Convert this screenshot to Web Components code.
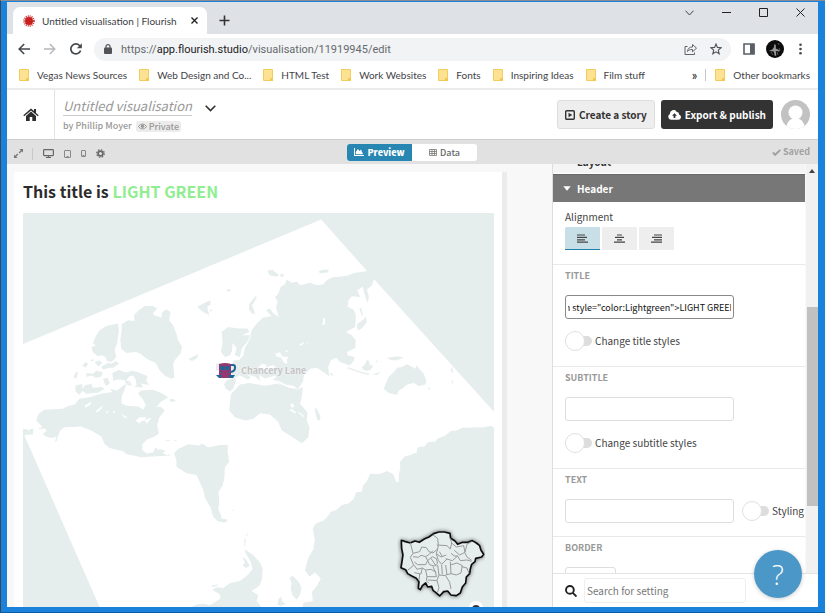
<!DOCTYPE html>
<html lang="en">
<head>
<meta charset="utf-8">
<title>Untitled visualisation | Flourish</title>
<style>
html, body { margin: 0; height: 100%; }
body { overflow: hidden; }
</style>
</head>
<body>
<browser-window></browser-window>
<script>
const BASE = `
:host, *, *::before, *::after { box-sizing: border-box; }
button { font: inherit; color: inherit; border: 0; background: none; padding: 0; margin: 0; display: flex; align-items: center; justify-content: center; }
a { color: inherit; text-decoration: none; }
svg { display: block; flex: none; }
`;
function element(name, css, html, setup) {
  const template = document.createElement('template');
  template.innerHTML = `<style>${BASE}${css}</style>${html}`;
  customElements.define(name, class extends HTMLElement {
    connectedCallback() {
      if (this.shadowRoot) return;
      this.attachShadow({ mode: 'open' }).append(template.content.cloneNode(true));
      if (setup) setup(this, this.shadowRoot);
    }
  });
}

element('browser-window', `
:host { display: flex; flex-direction: column; height: 100vh; padding: 1px 7px 5px 6px; background: #1a82da; border-left: 1px solid #3a4656; border-top: 1px solid #8b8b92; border-bottom: 1px solid #0a5ba8;
  font-family: Roboto, "Open Sans", sans-serif; color: #3c4043; --app: "Noto Sans CJK SC", "Open Sans", sans-serif; --chrome: Lato, Roboto, sans-serif; }
browser-tabs, browser-address, bookmark-bar, app-header, view-bar { flex: none; }
app-workspace { flex: 1; min-height: 0; }
`, `
<browser-tabs></browser-tabs>
<browser-address></browser-address>
<bookmark-bar></bookmark-bar>
<app-header></app-header>
<view-bar></view-bar>
<app-workspace></app-workspace>
`);

element('browser-tabs', `
:host { display: flex; height: 32px; background: #dee1e6; align-items: stretch; padding: 5px 6px 0 6px; }
.tab { width: 194px; background: #fff; border-radius: 7px 7px 0 0; display: flex; align-items: center; padding: 0 8px 0 10px; font-family: var(--chrome); font-size: 10px; gap: 7px; }
.tab span { flex: 1; white-space: nowrap; }
.new { width: 35px; color: #333; }
.win { margin-left: auto; display: flex; gap: 13px; padding-bottom: 16px; color: #222; }
.win button { width: 24px; }
`, `
<div class="tab">
<svg width="12" height="12" viewBox="0 0 12 12"><circle cx="6" cy="6" r="4" fill="#c8201f"/><circle cx="6" cy="6" r="4.7" fill="none" stroke="#d0393a" stroke-width="2.2" stroke-dasharray="1 .85"/></svg>
<span>Untitled visualisation | Flourish</span>
<button aria-label="Close tab"><svg width="9" height="9" viewBox="0 0 9 9" stroke="#222" stroke-width="1.4"><path d="M1.5 1.5l6 6M7.5 1.5l-6 6"/></svg></button>
</div>
<button class="new" aria-label="New tab"><svg width="11" height="11" viewBox="0 0 11 11" stroke="currentColor" stroke-width="1.6"><path d="M5.500.5v10M.5 5.500h10"/></svg></button>
<div class="win">
<button aria-label="Search tabs"><svg width="9" height="6" viewBox="0 0 9 6" fill="none" stroke="#444"><path d="M.5.7l4 4.300 4-4.300"/></svg></button>
<button aria-label="Minimise"><svg width="9" height="9" viewBox="0 0 9 9"><path d="M0 4.500h9" stroke="currentColor"/></svg></button>
<button aria-label="Maximise"><svg width="9" height="9" viewBox="0 0 9 9"><path d="M.5.5h8v8h-8z" fill="none" stroke="currentColor"/></svg></button>
<button aria-label="Close"><svg width="9" height="9" viewBox="0 0 9 9"><path d="M.5.5l8 8M8.500.5l-8 8" stroke="currentColor"/></svg></button>
</div>
`);

element('browser-address', `
:host { display: flex; height: 30px; background: #fff; align-items: center; padding: 0 13px 0 11px; }
nav { display: flex; gap: 14px; margin-right: 12px; }
nav button { width: 12px; height: 22px; }
.url { flex: 1; display: flex; align-items: center; height: 23px; border-radius: 12px; background: #f1f3f4; padding: 0 9px 0 10px; font-size: 11px; color: #666a6e; }
.url svg { margin-right: 9px; }
.url p { margin: 0; flex: 1; }
.url b { font-weight: 400; color: #202124; }
.url button svg { margin: 0; }
.url button + button { margin-left: 13px; }
.tools { display: flex; align-items: center; gap: 11px; margin-left: 12px; }
`, `
<nav>
<button aria-label="Back"><svg width="12" height="12" viewBox="0 0 12 12" fill="none" stroke="#45484c" stroke-width="1.600"><path d="M12 6H1.500M6.200 1L1.200 6l5 5"/></svg></button>
<button aria-label="Forward"><svg width="12" height="12" viewBox="0 0 12 12" fill="none" stroke="#b5b7ba" stroke-width="1.400"><path d="M0 6h10.500M5.800 1l5 5-5 5"/></svg></button>
<button aria-label="Reload"><svg width="12" height="12" viewBox="0 0 12 12" fill="none" stroke="#45484c" stroke-width="1.700"><path d="M10.600 7.500A5 5 0 1 1 9.500 2.500L11 4"/><path d="M11.800.2v5H6.800z" fill="#45484c" stroke="none"/></svg></button>
</nav>
<div class="url">
<svg width="8" height="10" viewBox="0 0 8 10"><rect y="3.600" width="8" height="6.400" rx="1" fill="#505358"/><path d="M2 4V2.600a2 2 0 0 1 4 0V4" fill="none" stroke="#505358" stroke-width="1.200"/></svg>
<p>https://<b>app.flourish.studio</b>/visualisation/11919945/edit</p>
<button aria-label="Share"><svg width="13" height="12" viewBox="0 0 13 12" fill="none" stroke="#5f6368"><path d="M3.500 3.500H1v8h9.500V9.500M3.500 8.500c.3-3 2-4.500 5-4.500V1.500l4 3.700-4 3.600V6.500c-2.500 0-4 .6-5 2z"/></svg></button>
<button aria-label="Bookmark"><svg width="12" height="12" viewBox="0 0 12 12" fill="none" stroke="#505358" stroke-width="1.100"><path d="M6 1l1.400 3.400 3.700.3-2.800 2.400.9 3.700L6 8.800l-3.200 2 .9-3.700L.9 4.700l3.700-.3z"/></svg></button>
</div>
<div class="tools">
<button aria-label="Side panel"><svg width="12" height="12" viewBox="0 0 12 12"><path d="M1 1h10v10H1z" fill="none" stroke="#5b5f66" stroke-width="1.600"/><path d="M7 1h4.500v10H7z" fill="#5b6068"/></svg></button>
<button aria-label="Profile"><svg width="18" height="18" viewBox="0 0 18 18"><circle cx="9" cy="9" r="9" fill="#0c0c0c"/><path d="M8.500 4l1.300 1v3.500l4 2-.5 1-3.500-.5.500 4.500-1.500.5-1-4.500-5-.5 3.500-1.500 1.500-2z" fill="#9a9a9a"/><path d="M12 3l1 2M13 8l1 3M5 12l2 3M11 12l1 3" stroke="#555"/></svg></button>
<button aria-label="Menu" style="width:10px"><svg width="3" height="12" viewBox="0 0 3 12" fill="#45484c"><circle cx="1.500" cy="1.700" r="1.300"/><circle cx="1.500" cy="6" r="1.300"/><circle cx="1.500" cy="10.300" r="1.300"/></svg></button>
</div>
`);

element('bookmark-item', `
:host { display: block; }
a { display: flex; align-items: center; gap: 8px; white-space: nowrap; }
`, `<a href="#"><svg width="10" height="12" viewBox="0 0 10 12"><path d="M.5.5h9v11h-9z" fill="#fde293" stroke="#f0cd5d"/><path d="M7 9h3v3H7z" fill="#f2c94f"/></svg><slot></slot></a>`);

element('bookmark-bar', `
:host { display: flex; align-items: center; height: 26px; padding: 0 8px 2px 12px; background: #fff; border-bottom: 2px solid #eaebec; font-family: var(--chrome); font-size: 10px; color: #3f4347; }
.list { flex: 1; display: flex; gap: 12px; }
.more { color: #222; padding-right: 8px; font-size: 13px; }
.other { border-left: 1px solid #c4c6c9; padding-left: 9px; }
`, `
<div class="list">
<bookmark-item>Vegas News Sources</bookmark-item><bookmark-item>Web Design and Co...</bookmark-item><bookmark-item>HTML Test</bookmark-item><bookmark-item>Work Websites</bookmark-item><bookmark-item>Fonts</bookmark-item><bookmark-item>Inspiring Ideas</bookmark-item><bookmark-item>Film stuff</bookmark-item>
</div>
<button class="more" aria-label="More bookmarks">»</button>
<div class="other"><bookmark-item>Other bookmarks</bookmark-item></div>
`);

element('app-header', `
:host { display: flex; align-items: center; height: 50px; background: #fff; border-bottom: 1px solid #cdcdcd; font-family: var(--app); padding-right: 8px; }
.home { width: 48px; align-self: stretch; display: flex; align-items: center; justify-content: center; border-right: 1px solid #e3e3e3; }
.name { margin-left: 8px; }
h1 { margin: 0 0 4px; font-size: 13px; line-height: 18px; font-weight: 400; font-style: italic; color: #999; border-bottom: 1px solid #ccc; }
.by { display: flex; align-items: center; gap: 4px; font-size: 9px; line-height: 12px; color: #999; font-weight: 500; }
.tag { display: flex; align-items: center; gap: 2px; background: #ececec; border-radius: 3px; padding: 0 2px; line-height: 11px; }
.menu { margin: 0 auto 12px 13px; }
.btn { height: 29px; border-radius: 3px; font-size: 10px; font-weight: 700; white-space: nowrap; gap: 4px; padding: 0 7px; }
.story { background: #eee; border: 1px solid #ddd; color: #333; }
.export { background: #333; color: #fff; margin: 0 8px 0 6px; }
`, `
<a class="home" href="#" aria-label="Home"><svg width="16" height="13" viewBox="0 0 16 13" fill="#2e2e2e"><path d="M8 .5l3 2.600V1h2v3.900l2.700 2.400-.9 1L8 2.400 1.200 8.300l-.9-1z"/><path d="M8 3.600l5 4.300V13H9.300V9H6.700v4H3V7.900z"/></svg></a>
<div class="name">
<h1>Untitled visualisation</h1>
<div class="by"><span>by Phillip Moyer</span><span class="tag"><svg width="9" height="7" viewBox="0 0 9 7"><path d="M.3 3.500Q4.500-1.500 8.700 3.500 4.500 8.500.3 3.500z" fill="none" stroke="#999"/><circle cx="4.500" cy="3.200" r="1.700" fill="#999"/></svg>Private</span></div>
</div>
<button class="menu" aria-label="Menu"><svg width="11" height="7" viewBox="0 0 11 7" fill="none" stroke="#333" stroke-width="1.600"><path d="M.7.8l4.800 4.800L10.300.8"/></svg></button>
<button class="btn story"><svg width="10" height="10" viewBox="0 0 10 10"><rect x=".7" y=".7" width="8.600" height="8.600" rx="1" fill="none" stroke="#333" stroke-width="1.400"/><path d="M3.500 2.700v4.600L7.300 5z" fill="#333"/></svg>Create a story</button>
<button class="btn export"><svg width="13" height="10" viewBox="0 0 13 10"><path d="M3 9.800a3 3 0 0 1-1-5.700A3.600 3.600 0 0 1 8.800 2a2.200 2.200 0 0 1 2.200 2.500 2.700 2.700 0 0 1-.8 5.300z" fill="#fff"/><path d="M6.500 3.200L4 5.800h1.600V8h1.800V5.800H9z" fill="#333"/></svg>Export &amp; publish</button>
<svg width="29" height="29" viewBox="0 0 29 29" role="img" aria-label="Account"><defs><clipPath id="c"><circle cx="14.500" cy="14.500" r="14.500"/></clipPath></defs><g clip-path="url(#c)"><path d="M0 0h29v29H0z" fill="#c2c2c2"/><circle cx="14.500" cy="12.500" r="7" fill="#fff"/><path d="M5 29c1-8 4-10.500 9.500-10.500S23 21 24 29z" fill="#fff"/></g></svg>
`);

element('view-bar', `
:host { display: grid; grid-template-columns: 1fr auto 1fr; align-items: center; height: 24px; background: #e1e1e1; font-family: var(--app); padding: 0 8px 0 7px; }
.left { display: flex; align-items: center; padding-top: 3px; }
.sep { width: 1px; height: 12px; background: #c8c8c8; margin: 0 10px 0 9px; }
.left button + button { margin-left: 10px; }
.tabs { display: flex; font-size: 9px; font-weight: 500; color: #666; height: 17px; border-radius: 3px; overflow: hidden; background: #fff; }
.tabs button { width: 65px; gap: 3px; }
.tabs .on { background: #2886b2; color: #fff; font-weight: 900; }
.saved { justify-self: end; display: flex; align-items: center; gap: 2px; font-size: 9px; line-height: 14px; font-weight: 700; color: #a2a2a2; }
`, `
<div class="left">
<button aria-label="Full screen"><svg width="9" height="9" viewBox="0 0 9 9" fill="#777"><path d="M5.500 0H9v3.500L7.800 2.300 5.700 4.400l-1-1 2.100-2.200zM3.500 9H0V5.500l1.200 1.200 2.100-2.100 1 1-2.100 2.200z"/></svg></button>
<span class="sep"></span>
<button aria-label="Desktop"><svg width="11" height="9" viewBox="0 0 11 9"><rect x=".6" y=".6" width="9.800" height="6" rx=".8" fill="none" stroke="#666" stroke-width="1.200"/><path d="M3 8.500h5M5.500 6.500V8.500" stroke="#666" stroke-width="1.200"/></svg></button>
<button aria-label="Tablet"><svg width="7" height="8" viewBox="0 0 7 8"><rect x=".5" y=".5" width="6" height="7" rx=".5" fill="none" stroke="#888"/><path d="M2.500 6.500h2" stroke="#888"/></svg></button>
<button aria-label="Mobile"><svg width="5" height="7" viewBox="0 0 5 7"><rect x=".5" y=".5" width="4" height="6" rx=".5" fill="none" stroke="#888"/><path d="M1.500 5.500h2" stroke="#888"/></svg></button>
<button aria-label="Settings"><svg width="9" height="9" viewBox="0 0 9 9"><circle cx="4.500" cy="4.500" r="2.400" fill="none" stroke="#6a6a6a" stroke-width="1.800"/><circle cx="4.500" cy="4.500" r="3.800" fill="none" stroke="#6a6a6a" stroke-width="1.200" stroke-dasharray="1.500 1.480"/></svg></button>
</div>
<div class="tabs">
<button class="on"><svg width="10" height="8" viewBox="0 0 10 8" fill="#fff"><path d="M0 0h1v7h9v1H0zM1.800 6.200V4l2-3 1.700 2 1.500-1.500 2 4.700z"/></svg>Preview</button>
<button><svg width="8" height="7" viewBox="0 0 8 7" fill="none" stroke="#777"><path d="M.5.5h7v6h-7zM.5 2.500h7M.5 4.500h7M3 .5v6M5.500.5v6" stroke-width=".8"/></svg>Data</button>
</div>
<div class="saved"><svg width="9" height="7" viewBox="0 0 9 7" fill="none" stroke="#a2a2a2" stroke-width="2"><path d="M.8 3.500l2.400 2.300L8.300.9"/></svg>Saved</div>
`);

element('app-workspace', `
:host { display: flex; background: #f8f8f8; font-family: var(--app); }
vis-preview { flex: 1; min-width: 0; margin: 8px 45px 0 7px; }
settings-panel { width: 266px; flex: none; }
`, `<vis-preview></vis-preview><settings-panel></settings-panel>`);

element('vis-preview', `
:host { display: flex; flex-direction: column; background: #fff; border-right: 5px solid #ebebeb; padding: 0 8px 0 9px; }
h2 { margin: 5px 0 8px; font-size: 16px; line-height: 28px; font-weight: 700; color: #2c2c2c; }
h2 span { color: #90ee90; }
world-map { flex: 1; min-height: 0; }
`, `<h2>This title is <span>LIGHT GREEN</span></h2><world-map></world-map>`);

element('map-controls', `
:host { display: flex; flex-direction: column; width: 26px; background: #fff; border: 1px solid #cdd3d3; border-radius: 4px; box-shadow: 0 0 0 1px #dbe1e1; }
button { height: 24px; }
button + button { height: 25px; border-top: 1px solid #ddd; }
`, `
<button aria-label="Zoom in"><svg width="10" height="10" viewBox="0 0 10 10" stroke="#222" stroke-width="2" stroke-linecap="round"><path d="M5 1v8M1 5h8"/></svg></button>
<button aria-label="Zoom out"><svg width="10" height="10" viewBox="0 0 10 10" stroke="#222" stroke-width="2" stroke-linecap="round"><path d="M1 5h8"/></svg></button>
<button aria-label="Reset bearing"><svg width="10" height="13" viewBox="0 0 10 13"><path d="M1 0v8l5.500-4z" fill="#222"/><path d="M9 13V5L3 8.800z" fill="#bbb"/></svg></button>
`);

element('world-map', `
:host { display: block; position: relative; overflow: hidden; background: #fff; }
.land { width: 100%; height: 100%; }
map-controls { position: absolute; top: 8px; right: 7px; }
.pin { position: absolute; left: 193px; top: 149px; display: flex; align-items: center; gap: 5px; font-size: 9px; line-height: 16px; font-weight: 700; color: #c4c4c4; white-space: nowrap; text-shadow: 0 0 2px #fff; }
.inset { position: absolute; right: 9px; bottom: 5px; }
.info { position: absolute; right: 11px; bottom: -11px; width: 14px; height: 17px; }
`, `
<svg class="land" viewBox="23 213 471 393" preserveAspectRatio="xMidYMin slice" fill="#e6eded">
<path d="M23 213H495V413L372 277 369 276 366 270 321 219.500 23 344z"/>
<path d="M23 428l5 1 2 2 4-1-1 3 1 1-6 0-3 1L100 606H23z"/>
<g transform="translate(30 330) scale(.3333)">
<path d="M200 15L210 0 230 -13 265 -20 268 0 262 40 255 60 260 80 245 95 232 92 228 80 215 75 205 78 190 66 186 50 200 45 190 40z"/>
<path d="M272 30L276 0 276 -18 295 -30 315 -28 313 -45 325 -58 345 -73 370 -73 383 -65 370 -52 372 -46 395 -38 398 -55 410 -63 422 -55 418 -30 430 -15 440 10 444 28 457 50 452 70 438 85 430 100 434 142 424 145 405 135 390 120 378 98 350 85 335 72 320 65 290 68 275 55z"/>
<path d="M215 108l20-10 10 2 15-8 8 8-18 12-10 0-20 5zM195 95l15-5 8 8-12 10zM158 105l10-10 8 5-8 12zM170 128l20 2 10-10 20 6-5 12-18 5-8-8-18 4zM132 145l5-18 8-3-3 18zM138 165l20-4 2 20-10 12-12-10zM165 165l20-5 5 12 25-2 10 5-20 12-35 3-12-10zM220 145l15-2 5 18-12 5zM180 90l12-3v6z"/>
<path d="M248 128l20-10 20 8 20-5 15 4 30 12-3 15 8 12-25-5 8 12-28-2-8-15-15 5-5-10-22-2-12 5z"/>
<path d="M20 270L28 250 45 238 100 235 112 228 135 222 150 205 180 200 215 190 248 185 242 175 262 180 278 168 290 160 284 180 277 195 275 218 290 226 325 228 342 237 348 222 338 205 325 190 333 180 370 178 395 188 415 200 392 215 380 230 392 228 405 240 388 262 382 285 388 308 375 318 352 327 338 340 338 358 350 369 370 366 378 350 388 362 410 373 420 371 422 375 380 377 335 380 290 370 280 362 240 352 225 340 215 318 185 300 155 288 105 290 92 300 85 318 68 322 55 320 40 312 52 300 38 288z"/>
<path d="M418 208l10-3 11 4-12 6zM475 85l12-4 18-10-3 12-15 9zM403 328l18 1-4 4zM428 330l12-3 0 4zM285 160l30-5-3 14z"/>
<path d="M0 296l12-1-3 15-9 2zM25 293l20-5-5 8zM75 335l10-25-2 20z"/>
<path d="M165 226l20-12-2 8-15 10zM198 242l22-18-4 10-14 12zM228 248l10-10-4 10zM250 240l8 5-5 3zM275 250l20 12-10 0zM318 270l12-10 20 0-4 8 20-6-16 18-4-10-12 2-4 8z" fill="#fff"/>
<path d="M290 150l8-12 12-3 8 12 3 18-14 6-4-18z" fill="#fff"/>
</g>
<g transform="translate(0 385) scale(.3333)">
<path d="M523 203L535 190 565 176 600 180 605 173 625 186 660 178 684 178 683 200 688 228 675 245 673 280 668 300 656 318 658 350 655 370 664 390 665 398 684 402 678 410 655 407 640 393 632 365 615 335 610 312 590 268 560 263 530 243 530 225z"/>
<path d="M694 376l8-3 0 3zM470 198l10-8 18 6-8 6zM738 450l6-10-2 10z"/>
<path d="M732 462L737 458 735 490 760 508 780 530 788 548 786 580 778 600 755 615 775 628 770 645 785 665H572L592 655 612 653 630 658 662 638 660 625 637 612 650 604 670 606 690 592 720 585 740 570 758 550 752 528 736 500z"/>
<path d="M726 512L738 520 749 540 738 546 728 538 735 530zM635 600l20-5-5 5-14 4z"/>
</g>
<g transform="translate(270 385) scale(.3333)">
<path d="M674 128L660 121 640 125 610 126 575 127 560 134 540 137 525 150 500 160 495 168 472 170 462 183 445 184 440 190 440 200 420 208 403 213 388 230 390 245 386 265 385 288 378 290 368 265 350 256 330 265 300 264 290 285 278 300 275 318 258 320 250 340 235 353 215 358 198 373 182 378 172 393 160 405 145 410 135 415 128 430 134 460 130 490 115 515 104 553 118 572 135 560 152 578 140 600 125 618 128 645 100 650 97 665H674z"/>
<path d="M58 575l10-5 18 18 8 18-4 20-10 15-12-12-6-20 2-18zM25 640l8-8 4 14 10 8-15 6-10-4z"/>
</g>
<g transform="translate(210 260) scale(.3333)">
<path d="M467 33L435 38 410 47 365 52 348 62 340 72 320 75 300 68 270 75 262 65 245 68 230 58 225 72 212 80 205 100 195 110 203 125 198 140 206 170 190 160 180 145 168 150 185 168 160 172 140 190 125 210 120 235 105 262 100 285 88 300 72 300 60 325 52 345 70 355 90 345 115 358 122 350 110 342 135 348 150 362 148 344 165 354 195 345 200 350 188 358 215 375 250 382 262 388 278 365 282 342 300 325 320 322 340 335 357 348 354 320 362 300 378 292 390 305 405 310 418 315 430 302 433 290 412 285 410 275 436 262 436 240 425 225 407 215 420 208 435 200 437 165 430 148 412 140 415 120 425 108 450 110 441 90 458 80 462 100 472 128 476 110 470 88 485 75 490 60 495 50 475 30z"/>
<path d="M35 215L55 200 85 205 112 205 118 215 95 225 120 225 115 240 95 265 90 290 75 285 80 262 68 248 66 272 60 285 45 290 33 275 38 250z"/>
<path d="M-38 140L-20 130 0 120 3 132-8 140-2 165-20 155zM118 130l20-23 2 6-14 22 10 28-12-5-7-12zM172 32l15-3 20 16-10 5-18-5zM210 42l10-1 1 10-9-2zM325 34l12-5 20 0-5 8-22 2zM50 90l8-5 4 6-8 4zM0 146l9 5-7 3zM18 312l10-6 4 20-14 6z"/>
<path d="M42 372l8-12 25-10 3 12-8 22-10 9-12-8z"/>
<path d="M64 400L90 372 120 368 165 376 200 370 232 378 262 388 278 380 275 410 270 430 292 455 290 480 298 500 295 530 275 548 240 525 215 510 205 485 180 462 150 458 130 475 105 480 75 470 58 450 60 425z"/>
<path d="M313 445l6-2 12 25-2 12-8-2zM455 320l10-8 4-12 6 0 4 14 10 2-8 12-12 4-10-4zM412 320l30 10-4 3-26-9zM438 330l40 10-3 4-35-9zM358 338l8 0 4 9-6-2zM530 292l35-4 15 4-20 8-18 0zM485 342l28-8-12 10zM440 192l22-16 4-8 4 18-18 20-10 4zM455 165l-8-20 6-2 6 22zM720 330l6-12 1 22zM724 355l5 15-5-3zM498 298l5 6-4 4zM652 383l8-2-4 8z"/>
<path d="M520 385L535 350 555 330 560 322 575 320 590 312 605 320 615 325 618 315 640 340 648 360 645 372 625 377 610 368 590 372 575 385 565 390 560 404 535 398z"/>
<g fill="#fff"><path d="M338 172l7 5 0 14-10 5 4-10zM268 252l15-7-6 8-8 4zM196 280l14-4 6 12 18 2-4 10 2 10-10-2-8-16-16-4zM145 320l12-10 14 4-4 8 20-8 12 6-14 6-36 2zM188 358l20 4 18 10 24 4 12 8-24-1-30-14zM240 432l8-4 6 10-8 4zM243 445l15 10-3 4-16-10zM265 453l18 14-4 2-14-12zM288 252l4-6 0 6zM225 274l6-6 2 8z"/></g>
</g>
</svg>
<div class="pin">
<svg width="20" height="17" viewBox="0 0 20 17"><path d="M15 3h2q2 0 2 2v1q0 3-4 4" fill="none" stroke="#1c6797" stroke-width="2"/><path d="M3 2Q9 0 15 2v11l-2 2H5l-2-2z" fill="#943873"/><path d="M0 13h5l2 2h4l2-2h6l-2 3H3z" fill="#1c6797"/><path d="M5 14l2-2h4l2 2v2H5z" fill="#943873"/><path d="M4.500 4h4v4h-4zM9.500 4h4v4h-4zM4.500 9.500h1.500V11H4.500zM12 9.500h1.500V11H12z" fill="#1c6797"/></svg>
<span>Chancery Lane</span></div>
<svg class="inset" width="88" height="75" viewBox="396 527 88 75" role="img" aria-label="London boroughs">
<defs><filter id="s" x="-20%" y="-20%" width="140%" height="140%"><feDropShadow dx="0" dy="0" stdDeviation="7" flood-color="#000" flood-opacity=".6"/></filter></defs>
<g transform="translate(270 385) scale(.3333)">
<path filter="url(#s)" d="M391 466L403 470 418 474 432 468 445 472 460 462 474 456 488 446 504 441 520 441 537 445 539 460 552 468 560 478 575 472 590 472 604 467 616 474 626 482 630 496 638 508 632 516 614 520 612 530 602 538 598 552 596 566 586 576 584 594 574 606 568 624 556 632 540 630 530 618 518 620 506 633 494 622 486 616 482 604 470 606 464 594 454 602 448 614 442 610 444 590 436 580 424 574 410 566 404 554 390 548 393 530 396 510 392 490z" fill="#e6eded" stroke="#111" stroke-width="5" stroke-linejoin="round"/>
<g fill="none" stroke="#999" stroke-width="3"><path d="M418 473L426 505 418 517 428 541 410 556M426 505l20-5 6-14 14 2 8 12 12 4 14-12 2-12-2-20-14-10M426 515l16 2 8-6 14 4 6 12-6 12-24 0-10-8M464 515l12-8 10-10M498 480l30 2 10 10 4-18-4-14M500 492l-4 14 14 10 16-6M542 474l14 12 22-4 4 20-16 8-16-14M582 502l6-24 14-8M582 504l6 12 14 10M540 505l10 8 10 0 8 14 20-2 14 4M560 513l-16 14-20-6M470 527l14-12 12 6 4 14-10 8-14-4-6-12zM480 520l16 24M496 506l6 20 10 12 16-16M505 500l10 16M430 541l8 12 16-4 10 6M454 549l-4 18-20-4M464 555l16-2 14 8 2 14-28 0-4-20M486 545l8 18M500 540l4 30-6 16 6 22-4 14M504 570l20 2 12 20 4 20M512 540l2 28M524 540l4 30M538 530l2 36 16 4 14-6 4-22-16-8-20 6M572 545l16 4 6 16M524 570l16-4M468 575l-2 12 8 8M470 585l28 2M446 567l-2 20"/></g>
</g>
</svg>
<svg class="info" viewBox="0 0 14 17"><circle cx="7" cy="7" r="7" fill="#fff"/><circle cx="7" cy="8" r="4" fill="#333"/></svg>
`);

element('toggle-switch', `
:host { display: block; }
label { display: flex; align-items: center; gap: 3px; font-size: 10px; line-height: 20px; color: #444; white-space: nowrap; }
input { appearance: none; margin: 0; width: 27px; height: 20px; display: grid; align-items: center; }
input::before, input::after { content: ""; grid-area: 1 / 1; }
input::before { justify-self: end; width: 18px; height: 10px; border-radius: 5px; background: #ddd; }
input::after { width: 20px; height: 20px; border-radius: 50%; background: #fff; border: 1px solid #e0e0e0; }
`, `<label><input type="checkbox"><slot></slot></label>`);

element('setting-section', `
:host { display: block; border-top: 1px solid #e9e9e9; padding: 4px 0 15px 12px; }
h4 { margin: 0 0 12px; font-size: 9px; line-height: 14px; font-weight: 700; color: #999; }
div { display: flex; flex-direction: column; gap: 12px; }
:host([inline]) { padding-bottom: 13px; }
:host([inline]) div { flex-direction: row; gap: 8px; align-items: center; }
`, `<h4></h4><div><slot></slot></div>`, (host, root) => { root.querySelector('h4').textContent = host.getAttribute('heading'); });

element('settings-panel', `
:host { display: flex; flex-direction: column; background: #fff; border-left: 1px solid #ddd; position: relative; }
.body { flex: 1; min-height: 0; display: flex; }
.list { flex: 1; overflow: hidden; min-width: 0; }
.group { height: 10px; display: flex; align-items: flex-end; overflow: hidden; background: #f4f4f4; border-bottom: 1px solid #fff; padding: 0 24px 4px; font-size: 10px; line-height: 14px; font-weight: 700; color: #333; }
.head { width: 100%; height: 28px; justify-content: flex-start; gap: 6px; padding-left: 10px; background: #777; color: #fff; font-size: 10px; font-weight: 700; border-top: 1px solid #666; }
.align { padding: 8px 0 14px 12px; font-size: 10px; line-height: 14px; color: #444; }
.align div { display: flex; gap: 2px; margin-top: 3px; }
.align button { width: 35px; height: 23px; background: #eee; }
.align .on { background: #c9dfe8; border-bottom: 1px solid #2180ab; border-radius: 2px 0 0 0; }
input[type=text] { display: block; width: 169px; height: 24px; border: 1px solid #ddd; border-radius: 3px; font: 10px var(--app); padding: 0 2px; color: #111; background: #fff; outline: 0; }
input[type=text].active { border-color: #888; font-size: 9px; }
input[type=text].small { width: 51px; }
.track { width: 13px; background: #f1f1f1; border-left: 1px solid #f8f8f8; display: flex; flex-direction: column; align-items: center; padding-top: 5px; }
.thumb { width: 11px; height: 199px; background: #c1c1c1; margin-top: 134px; }
.search { display: flex; align-items: center; height: 34px; border-top: 1px solid #e4e4e4; padding: 0 12px; gap: 7px; }
.search input[type=text] { width: 162px; height: 25px; border-color: #eee; }
input::placeholder { color: #777; }
.help { position: absolute; right: 16px; bottom: 9px; width: 48px; height: 48px; border-radius: 50%; background: #4b97c8; color: #fff; font: 300 28px "Open Sans", sans-serif; box-shadow: 0 1px 4px #0003; }
`, `
<div class="body">
<div class="list">
<div class="group">Layout</div>
<button class="head"><svg width="8" height="5" viewBox="0 0 8 5"><path d="M.3.3h7.400L4 4.700z" fill="#fff"/></svg>Header</button>
<div class="align">Alignment
<div>
<button class="on" aria-label="Left"><svg width="11" height="9" viewBox="0 0 11 9" stroke="#444" stroke-width="1.200"><path d="M0 1h8M0 3.400h10M0 5.800h8M0 8.200h11"/></svg></button>
<button aria-label="Centre"><svg width="11" height="9" viewBox="0 0 11 9" stroke="#444" stroke-width="1.200"><path d="M3 1h5M1 3.400h9M3 5.800h5M0 8.200h11"/></svg></button>
<button aria-label="Right"><svg width="11" height="9" viewBox="0 0 11 9" stroke="#444" stroke-width="1.200"><path d="M3 1h8M1 3.400h10M3 5.800h8M0 8.200h11"/></svg></button>
</div></div>
<setting-section heading="TITLE"><input class="active" type="text" aria-label="Title"><toggle-switch>Change title styles</toggle-switch></setting-section>
<setting-section heading="SUBTITLE"><input type="text" aria-label="Subtitle"><toggle-switch>Change subtitle styles</toggle-switch></setting-section>
<setting-section heading="TEXT" inline><input type="text" aria-label="Text"><toggle-switch>Styling</toggle-switch></setting-section>
<setting-section heading="BORDER"><input class="small" type="text" aria-label="Border"></setting-section>
</div>
<div class="track"><svg width="6" height="4" viewBox="0 0 6 4"><path d="M0 4h6L3 0z" fill="#444"/></svg><div class="thumb"></div></div>
</div>
<div class="search"><svg width="12" height="12" viewBox="0 0 12 12" fill="none" stroke="#222" stroke-width="1.900"><circle cx="4.900" cy="4.900" r="3.900"/><path d="M7.800 7.800l3.700 3.700"/></svg><input type="text" placeholder="Search for setting" aria-label="Search for setting"></div>
<button class="help" aria-label="Help">?</button>
`, (host, root) => {
  const input = root.querySelector('.active');
  const lead = 'This title is <span';
  input.value = lead + ' style="color:Lightgreen">LIGHT GREEN</span>';
  const pen = document.createElement('canvas').getContext('2d');
  pen.font = '9px "Noto Sans CJK SC"';
  input.scrollLeft = pen.measureText(lead).width - 2;
});
</script>
</body>
</html>
